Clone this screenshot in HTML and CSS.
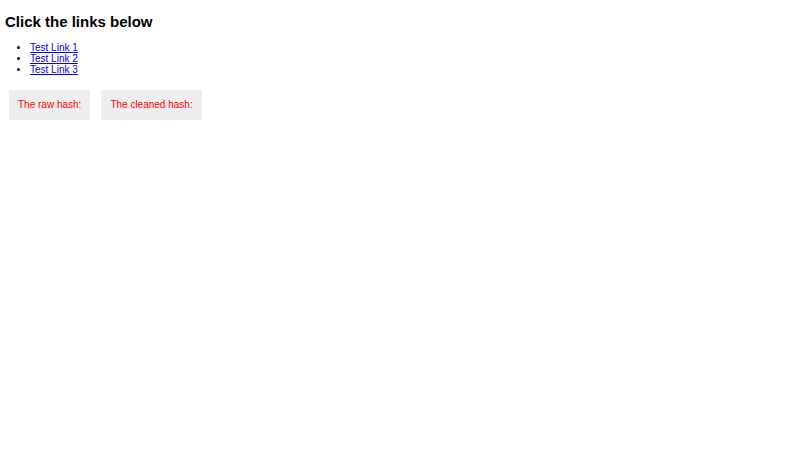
FILE: index.html
```html
<!DOCTYPE html>
<html>
<head>
<meta charset="utf-8">
<link rel="stylesheet" href="styles.css">
</head>
<body>
<h3 class="title">Click the links below</h3>
<ul class="links">
<li><a href="#test1">Test Link 1</a></li>
<li><a href="#test2">Test Link 2</a></li>
<li><a href="#test3">Test Link 3</a></li>
</ul>
<div class="hashes">
<div class="hash">The raw hash: <span class="raw"></span></div>
<div class="hash">The cleaned hash: <span class="clean"></span></div>
</div>
</body>
</html>
```
FILE: styles.css
```css
body {
  margin: 5px;
  font-family: "Liberation Sans", Arial, sans-serif;
  font-size: 10px;
  color: #000;
  background: #fff;
}
.title {
  font-size: 15px;
  font-weight: bold;
  margin: 8px 0 12px 0;
}
.links {
  margin: 0 0 15px 0;
  padding-left: 25px;
}
.links li {
  line-height: 11px;
}
.links a {
  color: #0000ee;
}
.hashes {
  display: flex;
  gap: 11px;
  padding-left: 4px;
}
.hash {
  background: #eeeeee;
  color: #ff0000;
  padding: 0 9px;
  height: 30px;
  line-height: 30px;
}
```
